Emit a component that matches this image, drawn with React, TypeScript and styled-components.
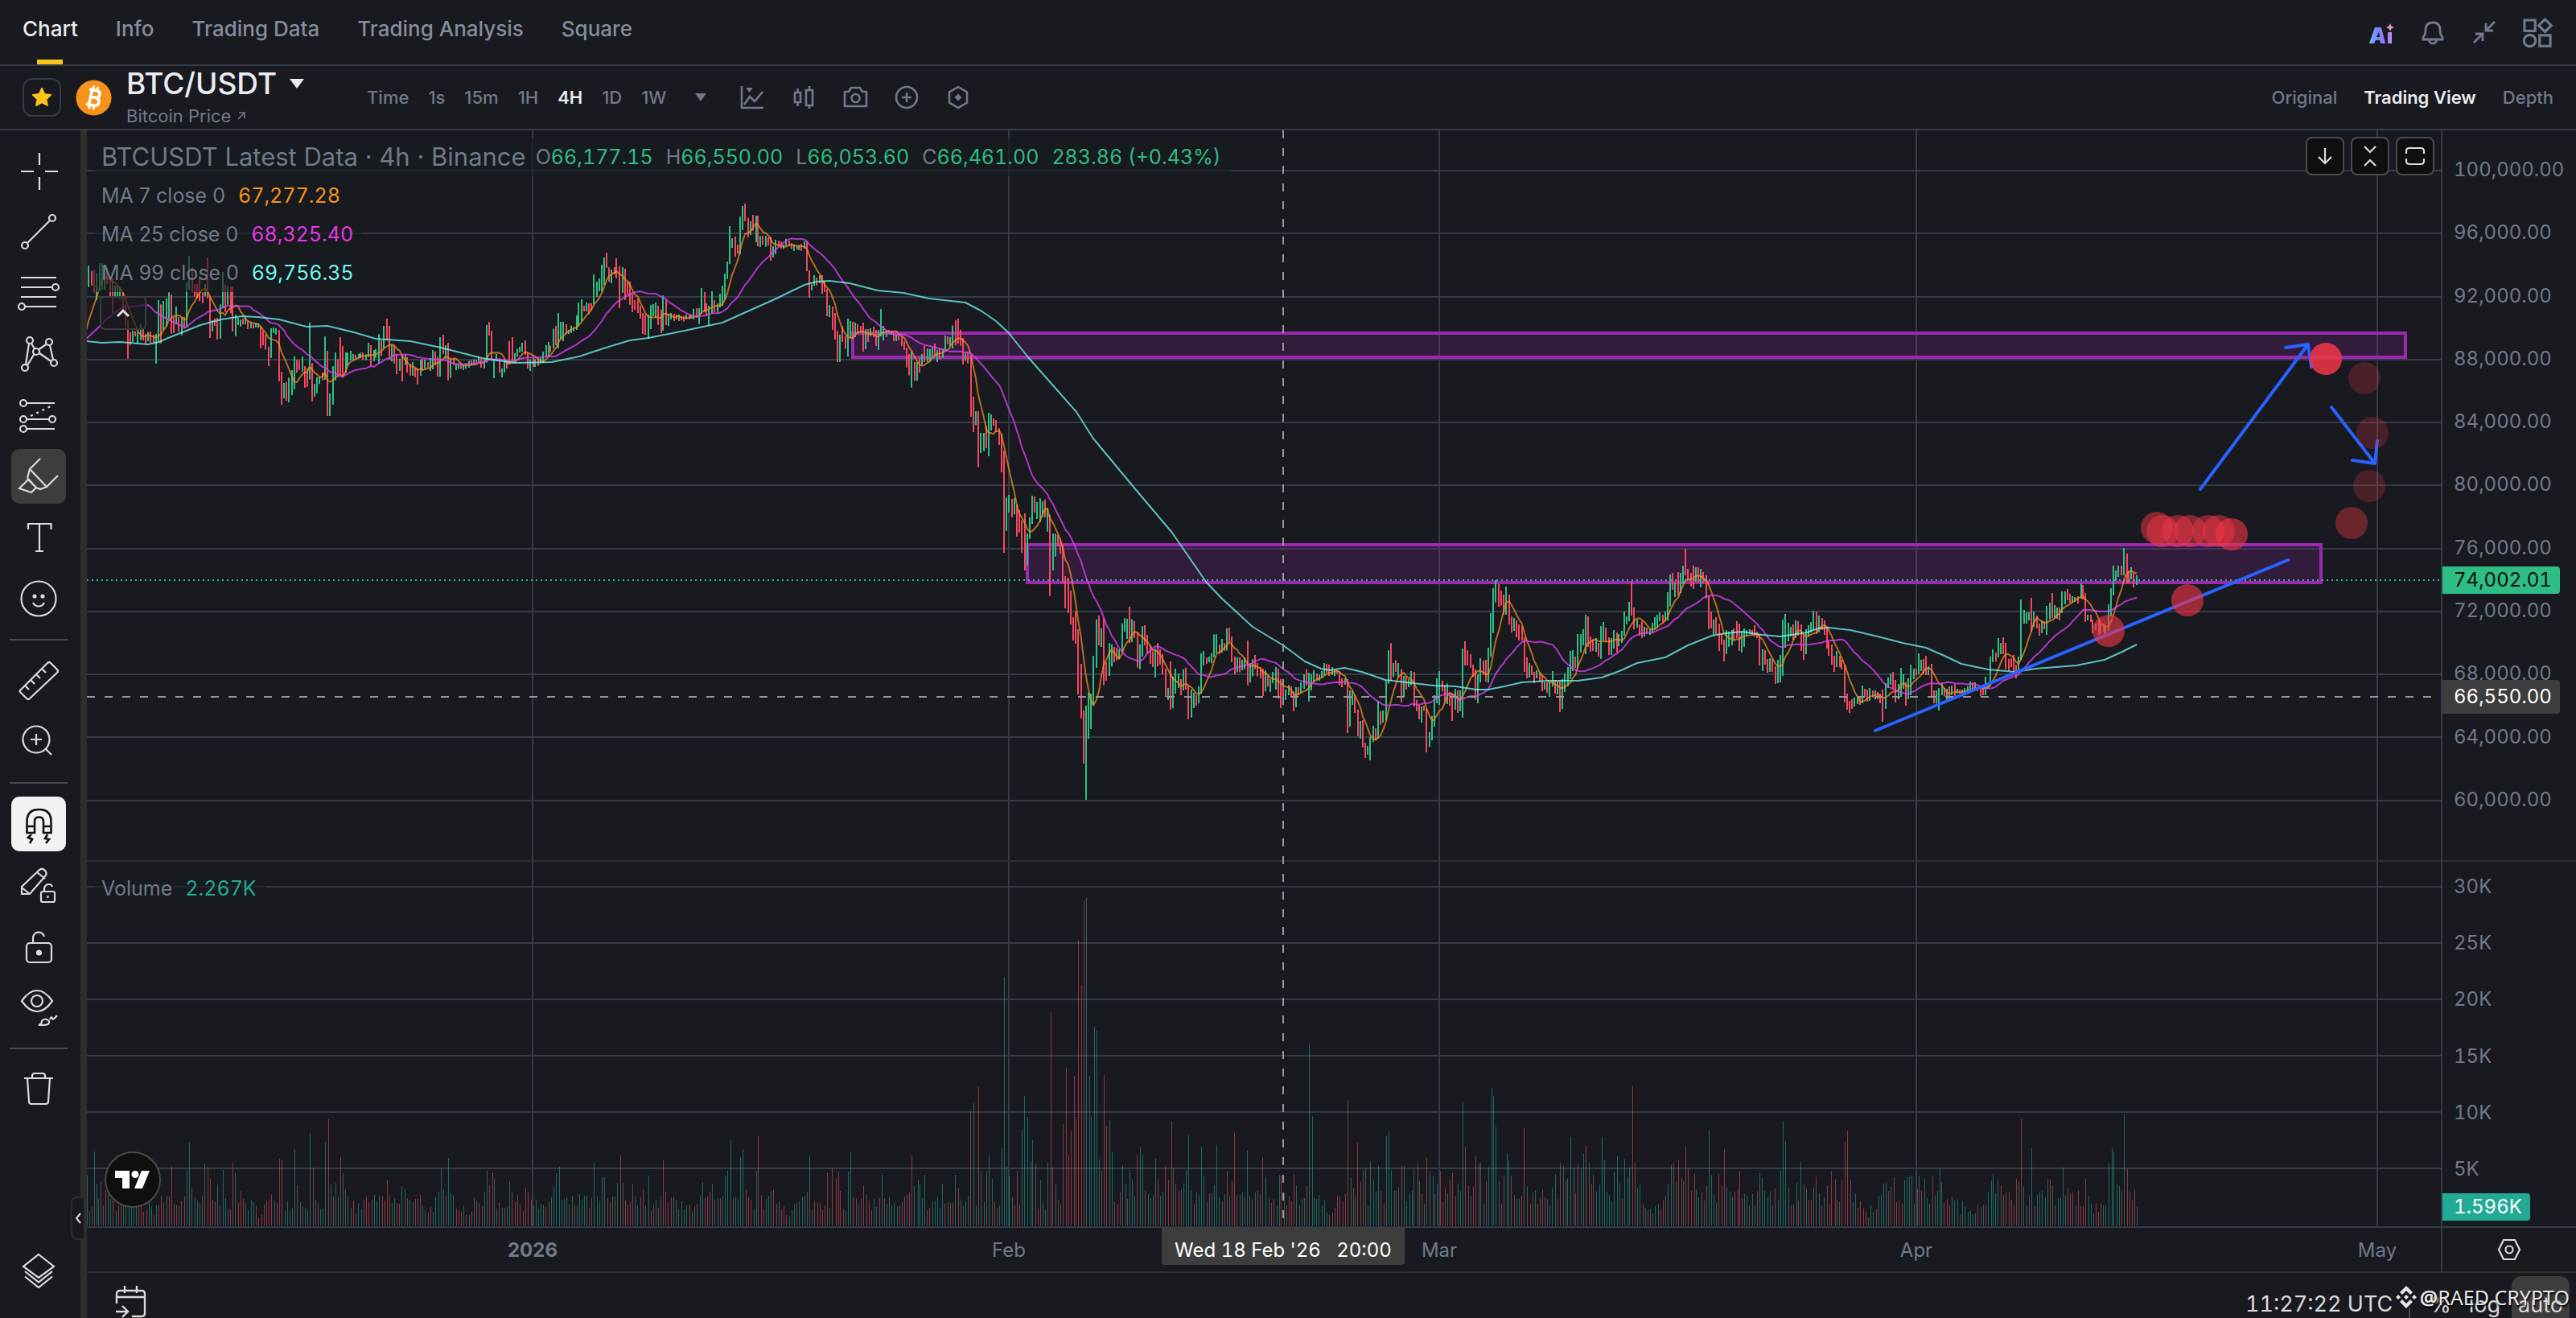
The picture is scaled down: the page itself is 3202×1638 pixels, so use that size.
import React from "react";
import styled, { createGlobalStyle } from "styled-components";

/* ---------- theme ---------- */

const c = {
  bg: "#181a20",
  line: "#333b47",
  pane: "#2e2e2c",
  text: "#eaecef",
  dim: "#848e9c",
  faint: "#707a8a",
  icon: "#dbdbdb",
  up: "#2ebd85",
  down: "#f6465d",
  tag: "#3d3d3d",
};
const font = `Inter, "Liberation Sans", sans-serif`;

const Global = createGlobalStyle`
  * { box-sizing: border-box; }
  html, body, #root { height: 100%; margin: 0; background: ${c.bg}; }
  body { font-family: ${font}; color: ${c.text}; overflow: hidden; }
  button { font: inherit; color: inherit; background: none; border: 0; padding: 0; margin: 0; cursor: pointer; }
  a { color: inherit; text-decoration: none; }
  svg { display: block; }
`;

/* ---------- market data ---------- */

type Candle = { x: number; top: number; bottom: number; up: boolean };
type Segment = { x: number; y: number; sx: number; sy: number; data: string };

const SEGMENTS: Segment[] = [
  {
    x: 100, y: 300, sx: 1.742, sy: 3,
    data: "13 140 262g,18 90 170g,24 110 165r,29 105 190r,35 118 218g,41 82 185g,47 82 180g,52 95 180g,58 110 160r,64 130 205r,69 140 268r,75 165 205g,80 165 205g,86 172 215g,92 192 260r,97 237 320r,103 293 437r,108 338 386r,113 333 376g,119 335 354r,124 338 380g,130 307 368g,136 324 370r,141 345 384r,147 338 372g,152 336 378r,158 348 379r,163 345 456g,169 219 376g,174 235 380r,180 222 330g,186 213 318g,191 190 288g,197 198 344r,202 282 341r,208 243 310g,213 282 336r,219 283 350g,225 281 326r,230 153 322g,235 54 180g,242 97 190r,247 158 206r,252 158 213r,258 130 223r,264 190 230r,270 158 205g,275 60 212r,281 202 360r,286 293 336g,291 287 315r,297 285 366r,303 235 363g,308 115 248g,313 162 263r,319 167 236g,325 168 268r,330 168 336r,336 273 354g,341 285 312g,347 292 318g,352 288 310r,357 283 309g,363 293 327r,369 303 324g,374 308 325r,380 303 321g,385 306 322g,391 318 399r,396 334 388r,401 347 403r,407 393 465r,413 324 434g,418 321 342g,424 324 347g,430 330 521r,435 486 609r,441 528 585g,446 524 594r,452 508 600g,458 480 574g,463 429 551g,469 441 490r,474 443 480r,480 430 487g,486 465 545r,491 473 542r,496 302 515g,502 453 596r,507 531 579g,513 506 567g,518 504 532g,524 489 518r,529 354 516g,535 408 651r,540 567 651g,547 465 609g,552 414 518g,557 440 503r,562 357 495r,568 390 508r,574 414 490g,579 414 464g,585 408 444g,590 420 441g,596 422 439r,602 419 436g,607 415 435g,612 414 442r,618 421 444g,624 378 431g,629 387 465r,635 405 446g,640 402 434g,646 345 455g,651 369 427r,657 315 399g,663 288 368r,669 315 441r,674 385 447g,679 388 455r,685 420 495r,691 437 482g,697 420 522r,703 420 460g,708 432 489r,714 456 500r,719 450 501g,725 471 506r,730 474 533r,736 441 501g,741 438 480r,746 440 475g,752 451 470r,758 435 483g,763 405 477g,769 410 462r,774 429 504r,779 357 504g,785 348 420r,790 387 438g,796 378 518r,802 440 509g,808 433 462r,813 455 480g,818 455 475g,824 459 475r,829 461 479g,835 455 474g,841 445 470g,846 443 462r,851 440 461g,857 440 460r,863 430 455g,868 437 471r,874 440 474g,880 312 452g,885 300 351r,890 333 447r,895 438 510g,901 420 447g,907 435 489r,913 474 507g,918 445 489g,923 440 474r,929 372 456r,935 357 450r,940 417 450g,946 400 430g,952 393 414g,957 378 411g,963 369 423r,969 415 474r,974 440 483g,980 432 469r,985 438 468g,991 434 465r,996 435 455g,1002 412 452g,1008 387 430g,1013 375 430g,1018 389 413r,1024 326 400g,1030 315 387r,1035 267 399g,1040 300 365g,1046 300 372g,1052 309 345r,1057 331 346g,1063 314 342g,1068 320 335g,1074 276 330g,1079 228 315g,1085 216 298g,1090 240 261r,1096 228 261g,1101 231 272r,1106 230 258r,1112 123 234g,1118 150 207g,1123 138 186g,1129 87 186g,1134 60 162g,1139 42 98r,1145 97 150r,1150 105 156g,1156 96 123r,1161 63 137r,1167 93 249r,1174 96 192g,1179 102 218r,1185 150 200r,1190 150 236r,1195 190 264r,1201 219 255r,1207 213 267r,1212 240 288r,1218 267 345r,1223 273 348r,1229 273 363g,1235 237 327g,1240 234 279g,1245 228 284g,1251 240 312r,1257 255 342r,1262 201 333g,1268 219 312r,1273 270 315g,1279 267 291g,1285 270 297r,1290 273 291r,1296 273 297g,1301 279 294r,1307 278 299r,1312 273 291g,1318 275 290r,1323 273 285g,1328 251 291g,1334 249 285r,1340 249 309g,1345 174 270g,1351 189 264r,1356 231 277r,1361 240 315g,1367 186 270g,1373 219 265r,1379 231 266g,1385 195 246g,1390 165 240g,1396 120 218g,1401 75 140g",
  },
  {
    x: 900, y: 0, sx: 1.568, sy: 3,
    data: "11 843 984g,16 888 924g,22 882 958r,27 912 945r,31 808 948g,36 768 858g,41 760 825r,47 813 885r,52 825 876g,57 801 860r,62 804 903g,66 804 918r,71 880 921g,76 880 912r,81 880 920g,87 885 915r,91 882 972r,96 918 960g,101 894 948g,106 897 921r,111 900 927r,116 912 927g,121 890 918g,127 897 918r,131 906 928r,137 912 936g,142 918 930r,146 915 932g,151 909 936r,157 900 927g,162 900 1011r,166 1008 1110r,171 1060 1083g,176 1026 1066g,181 1035 1064r,187 1027 1055g,192 1026 1095r,196 1050 1089r,200 1077 1179r,206 1137 1182g,211 1143 1230r,216 1167 1266r,221 1233 1350r,226 1248 1350g,231 1215 1275r,237 1254 1300r,242 1188 1330g,246 1197 1260g,251 1200 1262r,255 1203 1257g,261 1209 1242r,266 1215 1239r,271 1203 1311r,276 1227 1302g,281 1227 1275r,285 1224 1254g,291 1218 1257r,297 1230 1290r,301 1230 1305g,306 1152 1254g,311 1215 1270g,316 1230 1257g,321 1230 1245r,326 1233 1248g,331 1240 1272r,336 1245 1272g,341 1245 1270r,347 1254 1290r,352 1273 1305r,356 1297 1370r,361 1320 1400r,366 1310 1445g,371 1350 1420r,376 1350 1420g,381 1330 1390r,386 1320 1360g,390 1290 1350r,396 1300 1350g,401 1302 1345g,406 1297 1330g,411 1281 1325r,416 1305 1350g,421 1300 1340r,426 1300 1335g,431 1251 1311g,436 1254 1284r,440 1257 1290g",
  },
  {
    x: 1180, y: 380, sx: 2.24, sy: 2.45,
    data: "2 95 122g,9 60 130g,17 44 120r,24 39 115r,31 73 122r,38 98 179r,45 142 168g,52 140 176r,60 153 338r,67 277 385r,74 321 363g,80 321 492r,88 387 448g,96 387 443g,103 365 434r,110 326 458g,116 331 380g,123 343 365r,130 348 385r,139 373 424r,145 390 507r,152 441 752r,159 583 686g,166 576 630g,174 588 644r,181 585 635g,188 605 703r,195 622 691r,201 654 752r,210 632 806r,218 693 791g,224 644 710g,230 578 664g,237 581 630r,244 598 649g,253 586 659g,260 595 643g,266 590 644r,273 617 688g,280 637 884r,289 693 806g,295 693 764g,302 698 733r,309 710 755r,316 727 845r,323 823 921r,331 828 936r,338 867 970r,345 948 1019r,351 931 1029r,358 985 1183r,367 1090 1257r,374 1232 1394r,381 1218 1504g,388 1178 1318g,394 1181 1289g,401 1066 1213g,410 955 1102g,417 943 1034r,424 982 1039g,430 948 1156r,437 1085 1142r,446 1027 1127g,452 1031 1098g,459 1039 1085r,466 1041 1080r,473 1046 1076g,481 967 1056g,488 951 992g,495 953 1014g,502 916 1027r,509 955 1024g,515 960 1012r,524 994 1102r,531 1031 1107g,538 975 1068g,544 973 1034r,551 1002 1060r,560 1034 1090r,566 1053 1100r,573 1044 1132g,580 1027 1098r,587 1046 1093r,594 1061 1122r,602 1105 1191r,609 1164 1200g,616 1083 1230r,623 1129 1225g,630 1105 1181g,639 1120 1164g,645 1137 1186r,652 1107 1171g,658 1102 1169r,666 1156 1259r,674 1169 1254g,681 1178 1225g,688 1186 1218r,695 1159 1210g,701 1058 1181g,708 1051 1095g,716 1071 1090r,723 1068 1085g,730 1058 1088g,737 1000 1070g,744 1000 1058g,752 1031 1061r,759 1014 1056g,766 1027 1051r,773 982 1050g,779 980 1024r,786 1007 1085r,795 1068 1122r,802 1071 1116g,808 1071 1116r,816 1078 1110g,823 1071 1106g,831 1019 1156r,838 1088 1147g,844 1076 1129g,851 1063 1107r,858 1088 1129r,866 1100 1134r,873 1105 1188r,880 1110 1174g,887 1127 1159r,894 1137 1176g,901 1115 1149g,909 1100 1169g,916 1105 1196r,923 1137 1225r,930 1150 1195r,937 1168 1200g,945 1154 1186g,952 1159 1193r,959 1174 1235r,965 1161 1222g,972 1161 1186r,979 1147 1178g,988 1122 1166g,994 1107 1156r,1001 1117 1205g,1008 1122 1171g,1014 1110 1145g,1023 1120 1142r,1030 1124 1142g,1037 1112 1134g,1044 1088 1124g,1050 1090 1117r,1057 1093 1127r,1066 1100 1124g,1073 1110 1127g,1080 1110 1120r,1087 1112 1156r,1094 1134 1161r,1102 1134 1154g,1109 1137 1301r,1115 1171 1281g,1122 1173 1215g,1129 1186 1240r,1138 1230 1311r,1145 1264 1318g,1151 1262 1345r,1158 1330 1377r,1165 1340 1367g,1172 1313 1384g,1180 1279 1328g,1187 1286 1323r,1194 1203 1318g,1201 1235 1276r,1208 1232 1269g,1216 1142 1262g,1223 1049 1151g,1230 1027 1142r,1237 1088 1130g,1243 1080 1115r,1250 1088 1132g,1259 1107 1208r,1265 1127 1188g,1272 1129 1169r,1279 1137 1161g,1286 1112 1156g,1294 1115 1220r,1301 1200 1235r,1308 1214 1259r,1315 1220 1269g,1322 1218 1233r,1328 1227 1360r,1338 1298 1343g,1344 1249 1323g,1350 1186 1281g,1357 1134 1210g,1364 1112 1215g,1373 1142 1174r,1380 1156 1210r,1387 1151 1213g,1394 1178 1218r,1400 1181 1264r,1408 1166 1230g,1415 1171 1240r,1422 1171 1235g,1429 1044 1254g,1436 1022 1095r,1443 1049 1095r,1451 1061 1102r,1458 1093 1130r,1465 1107 1200r,1471 1122 1210g,1478 1073 1147g,1488 1080 1124r,1494 1078 1145r,1501 1041 1147g",
  },
  {
    x: 1840, y: 620, sx: 1.823, sy: 3,
    data: "24 426 588g,29 333 500g,35 302 386g,42 318 402r,47 342 398r,53 357 432r,58 327 432g,65 357 468r,71 438 498r,77 444 492g,82 453 516r,88 468 528r,94 474 528r,100 516 645r,106 591 669r,111 612 666g,117 621 657r,122 645 687r,128 639 669g,134 645 682r,140 657 717r,146 684 711g,152 684 723r,157 684 738g,164 642 700g,169 675 726r,175 681 729g,181 678 795r,186 672 783g,192 651 720g,198 627 699g,205 567 672g,210 564 642g,216 588 630r,221 504 633g,228 504 573g,234 486 546g,239 432 579g,244 438 552r,250 513 570r,256 525 567r,262 519 570g,268 537 588r,273 474 597g,279 459 528g,285 480 528r,292 516 582r,298 519 582g,303 489 558g,309 498 573r,314 504 549g,321 492 537g,327 420 510g,332 438 468g,337 384 456g,343 306 435r,348 405 486r,355 450 480g,361 468 510r,367 456 519r,372 477 513g,378 480 504r,385 486 507g,391 462 498g,396 441 486g,401 432 480g,407 423 456g,413 432 462r,419 420 456g,425 348 453g,430 282 402g,436 276 339r,441 312 366g,449 273 360r,454 276 351g,460 249 318g,465 186 285r,471 261 306r,478 276 327r,483 249 336r,488 255 309g,494 255 312r,500 261 330g,505 273 315r,512 285 372r,518 360 486r,523 420 483r,529 450 507g,535 441 504r,541 465 567r,547 504 543r,552 525 606r,558 489 579g,564 495 551g,570 489 546g,575 483 525r,581 456 519r,587 465 567r,592 495 573g,598 483 552g,604 489 510g,610 486 504g,616 489 507r,621 471 513r,627 495 519r,632 505 621r,640 561 642g,645 564 618r,651 597 648r,656 594 645g,662 597 645r,669 624 690r,674 600 687g,680 582 684g,686 450 660g,691 429 555g,698 462 531g,704 477 513g,709 468 525r,715 453 518g,720 456 510r,727 468 567r,733 504 600r,738 486 579g,744 471 513g,749 459 498g,755 417 489g,762 420 504r,768 435 498g,774 444 489r,780 453 507r,785 477 558r,790 530 585r,797 543 618r,802 585 645r,808 567 627g,814 585 628r,819 600 636r,826 618 759r,832 726 786r,837 753 798r,843 747 783r,848 741 774g,855 735 765g,861 738 768r,866 696 762g,872 708 738r,877 711 756r,883 705 753g,889 715 740r,895 714 747g,901 720 747r,906 726 762r,912 711 831r,919 687 783g,925 666 705g,930 651 693g,936 645 709r,941 675 759r,948 690 747g,954 630 738g,959 654 708g,965 684 771r,970 669 747g,976 618 732g,982 633 672g,988 633 658r,994 576 654g,999 600 642g,1005 597 654r,1010 585 657r,1016 624 657g,1023 615 738r,1028 714 762r,1034 714 762g,1039 705 789g,1047 687 732g,1052 705 736r,1058 708 756g,1063 699 747r,1069 696 732g,1076 690 744r,1081 708 726g,1087 711 726r,1092 711 726g,1098 705 726g,1104 699 720g,1111 681 711g,1116 684 708r,1121 684 705g,1127 699 717r,1133 705 735r,1140 699 732r,1145 663 732g,1151 690 708g,1156 588 700g,1162 561 609g,1168 573 606r,1174 519 591g,1180 537 579g,1185 516 579r,1191 537 636r,1197 597 642r,1203 594 628r,1208 582 657r,1214 618 669r,1220 588 651g,1225 375 600g,1232 414 465g,1238 423 465g,1243 423 453g,1249 369 495r,1254 420 477g,1261 435 483r,1267 465 510r,1272 453 500g,1278 456 486r,1284 399 507g,1290 387 450g,1297 351 444r,1302 396 447g,1307 405 447g,1312 405 453r,1318 345 426g,1325 345 393g,1331 336 378r,1337 354 387r,1342 363 387g,1348 366 384g,1354 363 390r,1361 315 372g,1366 321 375r,1371 351 459r,1377 432 453g,1383 432 459r,1388 450 501r,1395 465 489g,1401 450 507r,1406 465 501g,1412 465 498r,1417 471 504g,1424 393 492g,1430 333 438g,1435 249 360g,1441 267 306g,1446 249 291g,1453 249 285r,1459 183 285g,1465 204 315r,1470 270 315r,1475 255 300g,1481 276 330r,1488 285 321g",
  },
];

const candles: Candle[] = SEGMENTS.flatMap((s) =>
  s.data.split(",").map((item) => {
    const [x, t, b] = item.slice(0, -1).split(" ").map(Number);
    return { x: s.x + x / s.sx, top: s.y + t / s.sy, bottom: s.y + b / s.sy, up: item.endsWith("g") };
  }),
);

const closes = candles.map((k) => {
  const h = k.bottom - k.top;
  return k.up ? k.top + h * 0.3 : k.bottom - h * 0.3;
});

/* simple moving average; `before` is the price level ahead of the visible range */
const average = (n: number, before: number) => {
  const all = [...Array(n).fill(before), ...closes];
  return candles
    .map((k, i) => {
      const part = all.slice(i + 1, i + n + 1);
      return `${k.x.toFixed(1)},${(part.reduce((a, v) => a + v, 0) / n).toFixed(1)}`;
    })
    .join(" ");
};

const MA99 =
  "108,424 126,426 149,425 184,428 198,425 209,420 249,404 275,397 301,393 320,394 347,397 381,406 407,405 440,413 467,421 510,424 548,432 599,445 640,451 686,450 720,443 750,433 783,423 806,420 846,412 898,401 927,388 965,371 1000,354 1015,350 1031,349 1056,352 1091,361 1123,364 1155,371 1200,376 1219,386 1238,399 1254,414 1278,444 1308,478 1338,512 1359,545 1408,604 1457,662 1499,723 1519,744 1557,779 1595,802 1622,822 1642,831 1653,833 1671,830 1693,835 1722,845 1783,852 1809,853 1835,857 1850,857 1870,853 1892,848 1925,846 1961,846 1991,842 2013,834 2035,824 2070,817 2098,802 2128,790 2145,787 2166,785 2190,789 2213,791 2246,786 2260,781 2273,780 2300,783 2334,791 2365,799 2394,805 2417,815 2438,825 2471,832 2504,835 2531,831 2581,827 2616,820 2638,810 2656,801";

const VOLUME: Segment[] = [
  {
    x: 100, y: 1276, sx: 1.206, sy: 2.537,
    data: "10 1116g,21 1043g,24 1144g,30 1137r,37 1165r,72 1042g,136 1088r,159 1100g,163 1015g,167 1160r,186 1080g,190 1093r,194 1130r,205 1147g,213 1100g,228 1076r,232 1109g,298 1066r,302 1068r,321 1035g,325 1149r,344 984g,348 1093r,367 1015g,371 941r,375 1147g,382 1142g,390 1061r,393 1111g,436 1195r,448 1180g,459 1134r,463 1180r,481 1152g,486 1160g,490 1190r,505 1192r,540 1096g,544 1162g,551 1063g,609 1104g,613 1149r,617 1109r,620 1127g,643 1137g,647 1170r,667 1157r,671 1170r,709 1154g,713 1111g,717 1091g,748 1177g,755 1182g,770 1076g,782 1124g,785 1124g,790 1190r,805 1142g,809 1055r,813 1142g,827 1144r,843 1162r,851 1119g,873 1071r,877 1170r,932 1139g,943 1170r,947 1144g,966 1119g,970 1104g,974 1007g,989 1061g,993 1035g,997 1162r,1013 1104g,1016 995r,1028 1192g,1035 1167g,1093 1055g,1119 1109r,1127 1093r,1132 1127r,1136 1106r,1139 1167r,1151 1106g,1154 1045g,1174 1149r,1201 1116g,1246 1055r,1250 1152g,1255 1132g,1258 1147g,1265 1116g,1292 1144g,1311 1116g,1316 1157r,1334 916r,1339 891g,1346 840r,1350 1104g,1358 1104r,1362 1055g,1366 1129g,1381 1033g,1385 492g,1388 1091g,1392 1121g,1404 1104r,1411 974g,1415 868g,1420 934g,1424 1073g,1427 1007g,1431 1081r,1439 1132g,1450 1076g,1454 604r,1457 1093r,1462 1147g,1473 957r,1477 779r,1481 1055r,1485 977r,1489 804r,1492 941r,1496 378r,1500 517r,1504 251r,1508 243g,1512 804g,1515 931g,1519 650g,1523 660g,1527 1068g,1531 1104r,1534 802r,1538 964r,1542 944g,1546 1045g,1558 1170r,1562 1086g,1566 1144g",
  },
  {
    x: 1400, y: 1246, sx: 1.206, sy: 2.81,
    data: "5 1051g,9 1085g,16 1000r,21 972g,24 998g,28 1124r,44 1012g,47 1085r,58 1040r,63 1087r,67 882r,70 1045g,74 1102r,86 1099g,89 1051g,93 930g,97 1124g,112 972g,116 1073g,132 1104g,135 964g,151 1057r,158 1090r,162 922r,181 984g,204 1009r,209 1076g,229 1070g,232 1073r,251 1068r,255 1107g,270 1107r,274 610g,278 865g,281 1149g,320 1144r,332 809r,336 1079g,340 1116r,346 958r,351 1093r,355 1054g,358 1048r,366 1023g,370 1085g,378 1037g,389 933g,393 916g,397 1054g,401 1124g,408 1113g,412 1037r,416 1037g,428 1124g,431 1048g,436 1026r,439 1090g,450 1009r,455 1057g,459 1073g,466 1102g,470 1057r,478 1113r,485 1087r,489 1062r,497 1099g,504 815g,508 972r,512 1107r,520 1110r,524 1003r,528 1028r,531 1026g,539 1093r,543 1043g,547 764g,550 795g,554 902g,558 1090g,566 1071r,570 995g,573 1020g,577 1073r,596 905r,601 1110g,624 1121r,638 1113g,643 1068g,650 1026r,655 1037g,658 1090r,661 1082g,666 936g,670 1043g,677 1034r,681 1048g,685 995g,689 967r,693 1026g,697 1102r,700 1068r,709 1102g,713 936g,716 1017g,731 1060g,736 1003g,739 1099g,747 1014g,751 1076g,754 1043g,758 759r,762 1026r,766 1116g,770 1104g,812 1102g,816 1034g,820 1026r,824 1093g,827 1017r,832 1079r,835 1090g,838 969r,842 1048r,847 1124r,851 1065r,854 1121g,870 1107r,873 913g,877 1071g,888 1065r,893 1107r,896 978r,900 1113g,916 1118r,919 1057r,949 1062g,953 1079g,972 1116r,981 1054g,984 882g,988 953g,992 1113g,1004 1096g,1011 1023g,1015 1102r,1019 1118g,1030 1113g,1034 1076r,1050 1107r,1057 1057r,1062 1085r,1072 1087r,1077 953r,1081 916r,1085 1087r,1135 1099g,1138 1096g,1146 1110g,1150 1079r,1166 1087g,1170 1076g,1174 1076g,1177 1071g,1185 1118r,1188 1073g,1196 1082g,1208 1073r,1219 1045g,1222 1096g,1296 1090g,1299 1065g,1306 1085g,1311 1107r,1334 1082r,1338 1093g,1341 874r,1345 1110g,1357 975g,1381 1085g,1384 1085r,1388 1107g,1404 1043g,1411 1116r,1438 1082r,1472 1028g,1477 975g,1480 989g,1484 1102g,1488 1107g,1496 857g,1500 1048r,1507 1158r,1511 1121r,1515 1180g",
  },
];

type Bar = { x: number; h: number; up: boolean };
const BAR_PITCH = 3.19;

/* known bars, with the quiet stretches between them filled at a low level */
const bars: Bar[] = (() => {
  const known = VOLUME.flatMap((s) =>
    s.data.split(",").map((item) => {
      const [x, t] = item.slice(0, -1).split(" ").map(Number);
      return { x: s.x + x / s.sx, h: (s.y - t) / s.sy, up: item.endsWith("g") };
    }),
  );
  const out: Bar[] = [];
  let seed = 7;
  const rnd = () => {
    seed = (seed * 16807) % 2147483647;
    return seed / 2147483647;
  };
  known.forEach((k, i) => {
    out.push(k);
    const next = known[i + 1];
    if (!next) return;
    const n = Math.round((next.x - k.x) / BAR_PITCH) - 1;
    const quiet = n > 7;
    for (let j = 1; j <= n; j++) {
      const edge = Math.abs(j / (n + 1) - 0.5) * 2;
      const level = quiet ? 8 + 20 * edge : k.x > 1300 ? 24 : 18;
      out.push({ x: k.x + ((next.x - k.x) * j) / (n + 1), h: level + rnd() * 20, up: rnd() > 0.5 });
    }
  });
  return out;
})();

const sticks = (list: Candle[]) => list.map((k) => `M${Math.round(k.x)} ${k.top.toFixed(1)}V${k.bottom.toFixed(1)}`).join("");
const columns = (list: Bar[]) => list.map((k) => `M${Math.round(k.x) + 0.5} 1523v${(-k.h).toFixed(1)}`).join("");

const PRICES = Array.from({ length: 11 }, (_, i) => 100000 - i * 4000);
const VOLUMES = ["30K", "25K", "20K", "15K", "10K", "5K"];
const MONTH_LINES = [662, 1254, 1789, 2382, 2955];
const DOTS: [number, number, number][] = [
  [2891, 446, 0.85], [2939, 470, 0.23], [2949, 538, 0.23], [2945, 604, 0.23], [2923, 650, 0.38],
  [2681, 656, 0.5], [2688, 660, 0.5], [2707, 660, 0.5], [2722, 660, 0.5], [2745, 660, 0.5], [2758, 660, 0.5], [2774, 664, 0.6],
  [2719, 746, 0.62], [2621, 784, 0.62],
];

/* ---------- shell ---------- */

const Page = styled.div`
  height: 100vh;
  display: flex;
  flex-direction: column;
  background: ${c.bg};
`;

const TopBar = styled.header`
  display: flex;
  justify-content: space-between;
  height: 82px;
  padding: 0 28px;
  border-bottom: 2px solid ${c.line};
`;

const Tabs = styled.nav`
  display: flex;
  gap: 47px;
`;

const Tab = styled.a<{ $active?: boolean }>`
  position: relative;
  font-size: 26px;
  line-height: 72px;
  font-weight: 500;
  color: ${(p) => (p.$active ? c.text : c.dim)};
  &::after {
    content: "";
    display: ${(p) => (p.$active ? "block" : "none")};
    position: absolute;
    left: calc(50% - 16px);
    bottom: 0;
    width: 32px;
    height: 6px;
    background: #f8c51c;
  }
`;

const TopIcons = styled.div`
  display: flex;
  align-items: center;
  gap: 28px;
  color: ${c.faint};
`;

const PairBar = styled.div`
  display: flex;
  align-items: center;
  height: 80px;
  padding: 0 28px;
  border-bottom: 2px solid ${c.line};
`;

const StarButton = styled.button`
  display: grid;
  place-items: center;
  width: 48px;
  height: 48px;
  margin-right: 18px;
  border: 2px solid ${c.line};
  border-radius: 12px;
`;

const PairInfo = styled.div`
  display: flex;
  flex-direction: column;
  width: 299px;
  margin-left: 18px;
  padding-top: 6px;
`;

const PairName = styled.button`
  display: flex;
  align-items: center;
  gap: 16px;
  font-size: 37px;
  line-height: 40px;
  font-weight: 500;
`;

const PairLink = styled.a`
  font-size: 22px;
  line-height: 40px;
  color: ${c.faint};
  display: flex;
  align-items: center;
  gap: 8px;
`;

const Intervals = styled.div`
  display: flex;
  align-items: center;
  gap: 24px;
  color: ${c.faint};
  font-size: 22px;
`;

const Interval = styled.button<{ $active?: boolean }>`
  color: ${(p) => (p.$active ? c.text : c.faint)};
  font-weight: ${(p) => (p.$active ? 600 : 500)};
`;

const ChartTools = styled.div`
  display: flex;
  gap: 32px;
  margin-left: 29px;
  color: ${c.faint};
`;

const Views = styled.div`
  display: flex;
  gap: 33px;
  margin-left: auto;
  font-size: 22px;
`;

const Body = styled.main`
  flex: 1;
  min-height: 0;
  display: flex;
`;

const Toolbar = styled.aside`
  position: relative;
  display: flex;
  flex-direction: column;
  align-items: center;
  gap: 8px;
  width: 108px;
  padding: 16px 4px 20px 0;
  border-right: 8px solid ${c.pane};
`;

const Tool = styled.button<{ $tone?: "active" | "light" }>`
  width: 68px;
  height: 68px;
  border-radius: 10px;
  flex: none;
  background: ${(p) => (p.$tone === "active" ? c.tag : p.$tone === "light" ? "#f2f2f2" : "none")};
  color: ${(p) => (p.$tone === "light" ? "#0f0f0f" : c.icon)};
`;

const ToolRule = styled.hr`
  width: 72px;
  height: 2px;
  margin: 8px 0;
  border: 0;
  background: #4a4a4a;
`;

const ToolEnd = styled.div`
  margin-top: auto;
`;

const Handle = styled.button`
  position: absolute;
  right: -4px;
  bottom: 97px;
  display: grid;
  place-items: center;
  width: 16px;
  height: 54px;
  background: ${c.bg};
  border: 2px solid ${c.pane};
  border-right: 0;
  border-radius: 8px 0 0 8px;
  color: ${c.icon};
`;

const Main = styled.section`
  flex: 1;
  min-width: 0;
  display: flex;
  flex-direction: column;
`;

const ChartRow = styled.div`
  flex: 1;
  min-height: 0;
  display: flex;
`;

const Plot = styled.div`
  position: relative;
  flex: 1;
  min-width: 0;
  > svg { width: 100%; height: 100%; }
`;

const Axis = styled.div`
  display: grid;
  grid-template-rows: minmax(0, 909fr) minmax(0, 453fr);
  width: 168px;
  border-left: 2px solid ${c.line};
  color: ${c.faint};
  font-size: 24px;
  line-height: 30px;
  font-variant-numeric: tabular-nums;
`;

const PriceScale = styled.div`
  position: relative;
  display: flex;
  flex-direction: column;
  justify-content: space-between;
  padding: 34px 0 60px 14px;
  border-bottom: 2px solid ${c.pane};
`;

const VolumeScale = styled(PriceScale)`
  padding: 16px 0 56px 14px;
  border-bottom: 0;
`;

const AxisTag = styled.span<{ $top: number; $height: number; $bg: string; $color: string }>`
  position: absolute;
  left: 0;
  top: ${(p) => p.$top}px;
  height: ${(p) => p.$height}px;
  line-height: ${(p) => p.$height}px;
  padding: 0 10px 0 14px;
  border-radius: 0 4px 4px 0;
  background: ${(p) => p.$bg};
  color: ${(p) => p.$color};
`;

const Legend = styled.div`
  position: absolute;
  left: 8px;
  top: 9px;
  display: flex;
  flex-direction: column;
  align-items: flex-start;
  font-size: 25px;
  line-height: 48px;
  color: ${c.faint};
`;

const LegendRow = styled.div<{ $gap: number }>`
  display: flex;
  align-items: center;
  gap: ${(p) => p.$gap}px;
  padding: 0 12px 0 10px;
  background: rgba(24, 27, 30, 0.6);
  white-space: nowrap;
`;

const Quotes = styled.span`
  display: flex;
  gap: 16px;
`;

const Symbol = styled.span`
  font-size: 31px;
`;

const Value = styled.span<{ $color: string }>`
  color: ${(p) => p.$color};
  font-variant-numeric: tabular-nums;
`;

const LegendToggle = styled.button`
  display: grid;
  place-items: center;
  width: 58px;
  height: 42px;
  margin: 5px 0 0 8px;
  border: 2px solid #3d3d3d;
  border-radius: 6px;
  background: rgba(24, 27, 30, 0.7);
  color: ${c.icon};
`;

const VolumeLegend = styled(Legend)`
  top: calc(100% * 918 / 1362);
`;

const PaneButtons = styled.div`
  position: absolute;
  top: 8px;
  right: 8px;
  display: flex;
  gap: 8px;
`;

const PaneButton = styled.button`
  display: grid;
  place-items: center;
  width: 48px;
  height: 48px;
  border: 2px solid #4a4a4a;
  border-radius: 8px;
  background: #0f0f0f;
  color: ${c.icon};
`;

const Brand = styled.a`
  position: absolute;
  left: 22px;
  bottom: 23px;
  width: 70px;
  height: 70px;
  display: grid;
  place-items: center;
  border: 2px solid #4a4a4a;
  border-radius: 50%;
  background: #0f0f0f;
`;

const TimeRow = styled.div`
  display: flex;
  height: 58px;
  border-top: 2px solid ${c.line};
  border-bottom: 2px solid ${c.pane};
`;

const TimeScale = styled.div`
  position: relative;
  flex: 1;
  display: grid;
  grid-template-columns: 554fr 592fr 535fr 593fr 573fr 79fr;
  font-size: 24px;
  line-height: 56px;
  color: ${c.faint};
`;

const TimeLabel = styled.span<{ $bold?: boolean }>`
  justify-self: end;
  transform: translateX(50%);
  font-weight: ${(p) => (p.$bold ? 700 : 400)};
`;

const TimeTag = styled.span`
  position: absolute;
  left: calc(100% * 1487 / 2926);
  top: 0;
  transform: translateX(-50%);
  height: 46px;
  line-height: 56px;
  padding: 0 16px;
  border-radius: 0 0 4px 4px;
  background: ${c.tag};
  color: #fff;
  font-variant-numeric: tabular-nums;
  white-space: pre;
`;

const Corner = styled.div`
  display: grid;
  place-items: center;
  width: 168px;
  border-left: 2px solid ${c.line};
  color: ${c.icon};
`;

const Footer = styled.footer`
  position: relative;
  display: flex;
  justify-content: space-between;
  height: 56px;
  padding: 4px 8px 0 34px;
  overflow: hidden;
  color: ${c.icon};
  font-size: 27px;
  font-variant-numeric: tabular-nums;
`;

const DateButton = styled.button`
  align-self: flex-start;
  margin-top: 12px;
`;

const FooterRight = styled.div`
  display: flex;
  align-items: flex-start;
  line-height: 70px;
`;

const FooterRule = styled.i`
  width: 2px;
  height: 32px;
  margin: 40px 16px 0 20px;
  background: #4a4a4a;
`;

const ScaleButton = styled.button<{ $on?: boolean }>`
  height: 68px;
  padding: 2px 8px 0;
  border-radius: 12px;
  background: ${(p) => (p.$on ? c.tag : "none")};
  font-size: 27px;
  line-height: 68px;
  & + & { margin-left: 6px; }
`;

const Watermark = styled.div`
  position: absolute;
  right: 8px;
  top: 12px;
  display: flex;
  align-items: center;
  gap: 4px;
  font-family: "Noto Sans", sans-serif;
  font-size: 25px;
  line-height: 36px;
  color: #e6e6e6;
  text-shadow: 1px 2px 2px #000;
`;

/* ---------- icons ---------- */

const Draw = ({ size = 68, box = 68, w = 2.2, children }: { size?: number; box?: number; w?: number; children: React.ReactNode }) => (
  <svg width={size} height={size} viewBox={`0 0 ${box} ${box}`} fill="none" stroke="currentColor" strokeWidth={w} aria-hidden>
    {children}
  </svg>
);

const Ring = ({ x, y }: { x: number; y: number }) => <circle cx={x} cy={y} r="4" />;

const TOOLS_A: [string, React.ReactNode][] = [
  ["Cross", <path d="M12 35H28M42 35H58M35 12V27M35 42V58" />],
  ["Trend line", <><Ring x={17} y={51} /><Ring x={51} y={17} /><path d="M20 48 48 20" /></>],
  ["Fib retracement", <><path d="M12 15H56M12 27H51M12 39H56M17 51H56" /><Ring x={55} y={27} /><Ring x={13} y={51} /></>],
  ["Pattern", <><Ring x={17} y={51} /><Ring x={23} y={17} /><Ring x={31} y={31} /><Ring x={47} y={19} /><Ring x={53} y={45} /><path d="M18 47 22 21M25 21 29 27.500M20 48 28.500 34M34 28.500 44 21.500M48 23 52 41M35 33 49.500 43" /></>],
  ["Forecast", <><Ring x={15} y={19} /><Ring x={15} y={39} /><Ring x={51} y={39} /><Ring x={15} y={51} /><path d="M19 19H54M19 39H47M19 51H54" /><path d="M24 35 51 22" strokeDasharray="3 5" /></>],
  ["Brush", <path d="M36 12 23 25 20 36M21 38 10 49 25 54 31 48ZM20 36 31 48 36 50 44 47 58 33M23 25 44 47" />],
  ["Text", <path d="M21 24V17H49.500V24M35 17V51M30 51H40" />],
  ["Emoji", <><circle cx="34" cy="34" r="21.500" /><path d="M27 39c3 6 11 6 14 0" /><circle cx="29" cy="31" r="1.500" fill="currentColor" /><circle cx="39" cy="31" r="1.500" fill="currentColor" /></>],
];
const TOOLS_B: [string, React.ReactNode][] = [
  ["Measure", <path d="M11 46 45 12q2-2 4 0l8 8q2 2 0 4L23 56q-2 2-4 0l-8-8q-1-1 0-2ZM17 40l5 5M24 33l5 5M31 26l5 5M38 19l5 5" />],
  ["Zoom in", <><circle cx="31" cy="31" r="16.500" /><path d="M43 43 50 50M24 31H38M31 24V38" /></>],
];
const TOOLS_C: [string, React.ReactNode][] = [
  ["Lock drawing", <><path d="M13 45V36L35 15q4-3 7 1 3 4 0 7L23 45ZM13 37l10 8M32 18l10 8" /><rect x="37" y="42" width="17" height="13" rx="2" /><path d="M41 42v-4q1-5 6-5 3 0 4 3M45.500 47v3" /></>],
  ["Lock all", <><rect x="19" y="30" width="31" height="24" rx="4" /><path d="M27 30V24c0-9 12-10 14-2" /><circle cx="34.500" cy="42" r="2.500" fill="currentColor" /></>],
  ["Hide", <><path d="M13 26Q22 13 32 13T51 26Q42 39 32 39T13 26Z" /><circle cx="32" cy="26" r="7" /><path d="M34 56q4-1 4-5 4-5 9 0 1 5-7 5ZM48 49q2-5 3-1 1 2 6-4" /></>],
];

const TopIcon = ({ size = 36, children }: { size?: number; children: React.ReactNode }) => <Draw size={size} box={36} w={2.8}>{children}</Draw>;

/* ---------- chart ---------- */

const Chart = () => (
  <svg viewBox="108 162 2926 1362" preserveAspectRatio="none" fill="none" role="img" aria-label="BTCUSDT price and volume">
    <g stroke={c.line} strokeWidth="2">
      {PRICES.map((p, i) => <path key={p} d={`M108 ${Math.round(212 + i * 78.25)}H3034`} />)}
      {VOLUMES.map((v, i) => <path key={v} d={`M108 ${1102 + i * 70}H3034`} />)}
      {MONTH_LINES.map((x) => <path key={x} d={`M${x} 162V1524`} />)}
    </g>
    <path d="M108 1070H3034" stroke={c.pane} strokeWidth="2" />
    <g stroke="#9c27b0" strokeWidth="4" fill="rgba(156,39,176,0.2)">
      <rect x="1060" y="414" width="1930" height="30" />
      <rect x="1277" y="677" width="1608" height="47" />
    </g>
    <path d={columns(bars.filter((b) => b.up))} stroke="#22ab94" strokeOpacity="0.55" />
    <path d={columns(bars.filter((b) => !b.up))} stroke="#f7525f" strokeOpacity="0.52" />
    <path d={sticks(candles.filter((k) => k.up))} stroke={c.up} strokeWidth="2" />
    <path d={sticks(candles.filter((k) => !k.up))} stroke={c.down} strokeWidth="2" />
    <g strokeWidth="2" strokeLinejoin="round">
      <polyline points={average(7, 418)} stroke="#f7931a" strokeOpacity="0.7" />
      <polyline points={average(25, 424)} stroke="#e040fb" strokeOpacity="0.75" />
      <polyline points={MA99} stroke="#73f7f3" strokeOpacity="0.75" />
    </g>
    <path d="M108 721H3034" stroke={c.up} strokeWidth="2" strokeDasharray="2 4" />
    <g stroke="#2962ff" strokeWidth="4" strokeLinecap="round" strokeLinejoin="round">
      <path d="M2331 908 2844 696" />
      <path d="M2735 608 2869 428M2841 432 2869 428 2873 456" />
      <path d="M2898 506 2952 576M2924 572 2952 576 2955 548" />
    </g>
    {DOTS.map(([x, y, o]) => <circle key={`${x}-${y}`} cx={x} cy={y} r="20" fill="#f23645" fillOpacity={o} />)}
    <path d="M108 866H3024M1595 162V1524" stroke="#9598a1" strokeWidth="2" strokeDasharray="10 12" />
  </svg>
);

/* ---------- page ---------- */

const TABS = ["Chart", "Info", "Trading Data", "Trading Analysis", "Square"];
const INTERVALS = ["Time", "1s", "15m", "1H", "4H", "1D", "1W"];
const OHLC: [string, string][] = [["O", "66,177.15"], ["H", "66,550.00"], ["L", "66,053.60"], ["C", "66,461.00"], ["", "283.86 (+0.43%)"]];
const MAS: [string, string, string][] = [
  ["MA 7 close 0", "67,277.28", "#f7931a"],
  ["MA 25 close 0", "68,325.40", "#e835e8"],
  ["MA 99 close 0", "69,756.35", "#73f7f3"],
];

const tools = (list: [string, React.ReactNode][]) =>
  list.map(([name, art]) => (
    <Tool key={name} aria-label={name} $tone={name === "Brush" ? "active" : undefined}><Draw>{art}</Draw></Tool>
  ));

export default function App() {
  return (
    <Page>
      <Global />
      <TopBar>
        <Tabs>
          {TABS.map((t, i) => <Tab key={t} href="#" $active={i === 0}>{t}</Tab>)}
        </Tabs>
        <TopIcons>
          <button aria-label="AI">
            <svg width="36" height="36" viewBox="0 0 36 36" aria-hidden>
              <defs><linearGradient id="ai" x1="0" x2="1"><stop offset="0" stopColor="#6fb6f2" /><stop offset=".45" stopColor="#7b7bff" /><stop offset="1" stopColor="#c08cf5" /></linearGradient></defs>
              <path fill="url(#ai)" fillRule="evenodd" d="M3 32 10 12h8l5 20h-6l-1-4h-5l-2 4ZM12 24h4l-1-6ZM26 18h5v14h-5Z" />
              <path fill="#e0a0c8" d="m29 7 1.500 3.500L34 12l-3.500 1.500L29 17l-1.500-3.500L24 12l3.500-1.500Z" />
            </svg>
          </button>
          <button aria-label="Notifications"><TopIcon><path d="M6 27v-3q3-3 3-9 0-9 9-9t9 9q0 6 3 9v3ZM13 27q1 5 5 5t5-5" /></TopIcon></button>
          <button aria-label="Collapse"><TopIcon><path d="M31 5 20 16M20 7v9h9M5 31 16 20M7 20h9v9" /></TopIcon></button>
          <button aria-label="Layout"><TopIcon size={40}><path d="M3.500 4.500h12v12h-12ZM20.500 21.500h12v12h-12ZM26.500 3.500l7 7-7 7-7-7Z" /><circle cx="9.500" cy="27.500" r="6.500" /></TopIcon></button>
        </TopIcons>
      </TopBar>

      <PairBar>
        <StarButton aria-label="Favourite">
          <svg width="28" height="28" viewBox="0 0 28 28" aria-hidden><path fill="#fcc419" stroke="#fcc419" strokeWidth="2" strokeLinejoin="round" d="m14 3 3.300 7 7.700 1-5.600 5.300 1.400 7.700-6.800-3.800-6.800 3.800 1.400-7.700L3 11l7.700-1Z" /></svg>
        </StarButton>
        <svg width="45" height="45" viewBox="0 0 45 45" aria-hidden>
          <circle cx="22.500" cy="22.500" r="22" fill="#f7931a" />
          <g transform="rotate(12 22.500 22.500)" fill="none" stroke="#fff" strokeWidth="3.600">
            <path d="M15 13h9q5 0 5 4.500T24 22h-6M24 22q6 0 6 5t-6 5h-9M18.500 13v19" /><path d="M19.500 8v5M25 8v5M19.500 32v5M25 32v5" strokeWidth="2.800" />
          </g>
        </svg>
        <PairInfo>
          <PairName>BTC/USDT<svg width="18" height="12" viewBox="0 0 18 12" aria-hidden><path d="M0 0h18L9 12Z" fill={c.text} /></svg></PairName>
          <PairLink href="#">Bitcoin Price<svg width="10" height="10" viewBox="0 0 10 10" stroke={c.faint} strokeWidth="1.500" fill="none" aria-hidden><path d="M2 1h7v7M9 1 1 9" /></svg></PairLink>
        </PairInfo>
        <Intervals>
          {INTERVALS.map((t) => <Interval key={t} $active={t === "4H"}>{t}</Interval>)}
          <Interval aria-label="More intervals"><svg width="38" height="10" viewBox="0 0 38 10" aria-hidden><path d="M12 0h14l-7 10Z" fill={c.faint} /></svg></Interval>
        </Intervals>
        <ChartTools>
          <button aria-label="Indicators"><Draw size={32} box={32} w={2.6}><path d="M3 2v27h27M6 25l7-10 6 6L29 9" /><path d="M8 4h9l-4.500 6Z" fill="currentColor" stroke="none" /></Draw></button>
          <button aria-label="Chart type"><Draw size={32} box={32} w={2.6}><path d="M5 10h7v12H5ZM8.500 5v5M8.500 22v5M19 7h8v19h-8ZM23 2v5M23 26v4" /></Draw></button>
          <button aria-label="Screenshot"><Draw size={32} box={32} w={2.6}><path d="M3 9h5l3-5h11l3 5h5v18H3Z" strokeLinejoin="round" /><circle cx="16.500" cy="17" r="5" /></Draw></button>
          <button aria-label="Add"><Draw size={32} box={32} w={2.6}><circle cx="16" cy="16" r="13" /><path d="M10 16h12M16 10v12" /></Draw></button>
          <button aria-label="Settings"><Draw size={32} box={32} w={2.6}><path d="M16 3l11 6.500v13L16 29 5 22.500v-13Z" /><path d="M16 11.500l4.500 4.500-4.500 4.500-4.500-4.500Z" fill="currentColor" stroke="none" /></Draw></button>
        </ChartTools>
        <Views>
          <Interval>Original</Interval>
          <Interval $active>Trading View</Interval>
          <Interval>Depth</Interval>
        </Views>
      </PairBar>

      <Body>
        <Toolbar>
          {tools(TOOLS_A)}
          <ToolRule />
          {tools(TOOLS_B)}
          <ToolRule />
          <Tool $tone="light" aria-label="Magnet">
            <Draw w={2.6}><path d="M19.500 45V31q0-15 15-15t15 15V45H40V31q0-5.500-5.500-5.500T29 31V45ZM19.500 37H29M40 37h9.500" /><path d="m25 47-4 4 5 2-3 5M45 47l-3 5 5 1-4 5" /></Draw>
          </Tool>
          {tools(TOOLS_C)}
          <ToolRule />
          <Tool aria-label="Remove"><Draw><path d="M16 20H52M26 20v-3q0-3 3-3h10q3 0 3 3v3M20 20l2 29q0 3 3 3h18q3 0 3-3l2-29" /></Draw></Tool>
          <ToolEnd>
            <Tool aria-label="Object tree"><Draw><path d="M34 13 53 28 34 42 15 28ZM17 34 34 47.500 51 34M17 40.500 34 54 51 40.500" /></Draw></Tool>
          </ToolEnd>
          <Handle aria-label="Hide toolbar"><svg width="8" height="14" viewBox="0 0 8 14" fill="none" stroke="currentColor" strokeWidth="2" aria-hidden><path d="M7 1 2 7l5 6" /></svg></Handle>
        </Toolbar>

        <Main>
          <ChartRow>
            <Plot>
              <Chart />
              <Legend>
                <LegendRow $gap={12}>
                  <Symbol>BTCUSDT Latest Data · 4h · Binance</Symbol>
                  <Quotes>
                    {OHLC.map(([k, v]) => <span key={k}>{k}<Value $color={c.up}>{v}</Value></span>)}
                  </Quotes>
                </LegendRow>
                {MAS.map(([k, v, col]) => (
                  <LegendRow key={k} $gap={16}><span>{k}</span><Value $color={col}>{v}</Value></LegendRow>
                ))}
                <LegendToggle aria-label="Collapse legend"><svg width="18" height="12" viewBox="0 0 18 12" fill="none" stroke="currentColor" strokeWidth="3" aria-hidden><path d="m2 10 7-7 7 7" /></svg></LegendToggle>
              </Legend>
              <VolumeLegend>
                <LegendRow $gap={16}><span>Volume</span><Value $color="#22ab94">2.267K</Value></LegendRow>
              </VolumeLegend>
              <PaneButtons>
                <PaneButton aria-label="Move pane down"><Draw size={28} box={28}><path d="M14 4v19M6 15l8 8 8-8" /></Draw></PaneButton>
                <PaneButton aria-label="Collapse pane"><Draw size={28} box={28}><path d="m7 2 7 7 7-7M7 26l7-7 7 7" /></Draw></PaneButton>
                <PaneButton aria-label="Maximize pane"><Draw size={28} box={28}><path d="M3 11V8q0-4 4-4h14q4 0 4 4v3M3 17v3q0 4 4 4h14q4 0 4-4v-3" /></Draw></PaneButton>
              </PaneButtons>
              <Brand href="#" aria-label="TradingView">
                <svg width="44" height="24" viewBox="0 0 44 24" fill="#fff" aria-hidden><path d="M0 1h18v22H9V10H0ZM33 1h10l-9 22H24Z" /><circle cx="25" cy="5.500" r="4.500" /></svg>
              </Brand>
            </Plot>
            <Axis>
              <PriceScale>
                {PRICES.map((p) => <span key={p}>{p.toLocaleString("en-US")}.00</span>)}
                <AxisTag $top={542} $height={34} $bg={c.up} $color="#0f0f0f">74,002.01</AxisTag>
                <AxisTag $top={683} $height={42} $bg={c.tag} $color="#fff">66,550.00</AxisTag>
              </PriceScale>
              <VolumeScale>
                {VOLUMES.map((v) => <span key={v}>{v}</span>)}
                <AxisTag $top={412} $height={34} $bg="#22ab94" $color="#fff">1.596K</AxisTag>
              </VolumeScale>
            </Axis>
          </ChartRow>
          <TimeRow>
            <TimeScale>
              <TimeLabel $bold>2026</TimeLabel>
              <TimeLabel>Feb</TimeLabel>
              <TimeLabel>Mar</TimeLabel>
              <TimeLabel>Apr</TimeLabel>
              <TimeLabel>May</TimeLabel>
              <TimeTag>{"Wed 18 Feb '26   20:00"}</TimeTag>
            </TimeScale>
            <Corner><Draw size={32} box={32}><path d="M9 4h14l6 12-6 12H9L3 16Z" /><circle cx="16" cy="16" r="4.500" /></Draw></Corner>
          </TimeRow>
          <Footer>
            <DateButton aria-label="Go to date"><Draw size={44} box={44} w={2.4}><path d="M3 22V10q0-4 4-4h27q4 0 4 4v24q0 4-4 4H22M3 14h35M13 0v9M28 0v9M2 32h14M10 25l7 7-7 7" /></Draw></DateButton>
            <FooterRight>
              <span>11:27:22 UTC</span>
              <FooterRule />
              <ScaleButton>%</ScaleButton>
              <ScaleButton>log</ScaleButton>
              <ScaleButton $on>auto</ScaleButton>
            </FooterRight>
            <Watermark>
              <svg width="26" height="28" viewBox="0 0 26 28" fill="#e6e6e6" aria-hidden><path d="m13 0 8 8-3 3-5-5-5 5-3-3ZM13 28l8-8-3-3-5 5-5-5-3 3ZM13 11l3 3-3 3-3-3ZM3 11l3 3-3 3-3-3ZM23 11l3 3-3 3-3-3Z" /></svg>
              <span><b>@</b>RAED CRYPTO</span>
            </Watermark>
          </Footer>
        </Main>
      </Body>
    </Page>
  );
}
